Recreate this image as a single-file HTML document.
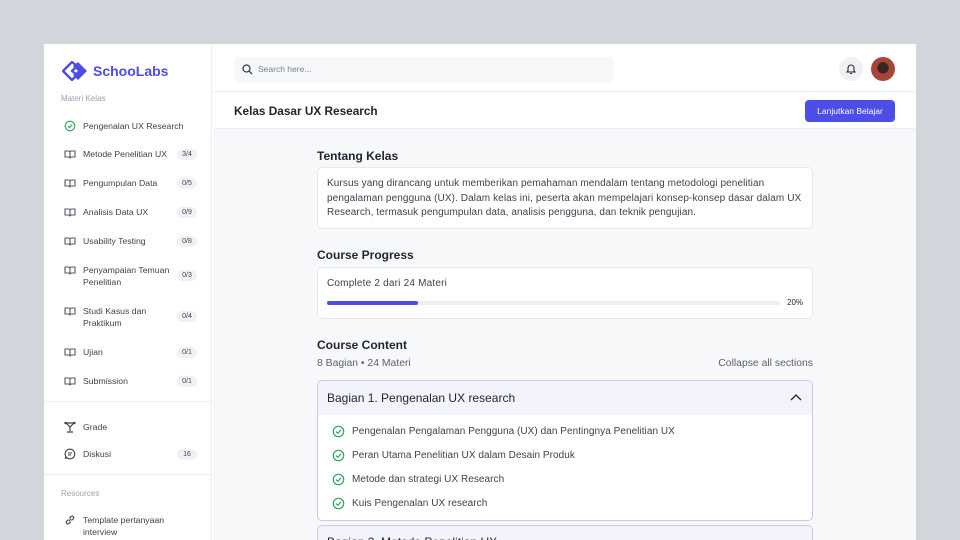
<!DOCTYPE html>
<html><head><meta charset="utf-8"><style>
*{margin:0;padding:0;box-sizing:border-box}
body{width:960px;height:540px;overflow:hidden;background:#d3d5dc;font-family:"Liberation Sans",sans-serif;position:relative;color:#1f2430}
.a{position:absolute}
.card{left:44px;top:44px;width:872px;height:496px;background:#fff;overflow:hidden}
.side{left:0;top:0;width:168px;height:496px;background:#fff;border-right:1px solid #eceef2}
.main{left:169px;top:0;width:703px;height:496px;background:#f7f8fa}
.it{position:absolute;left:20px;font-size:8.7px;color:#3c4250;line-height:12px}
.it svg{position:absolute;left:0;top:0}
.it span{position:absolute;left:19px;white-space:nowrap}
.bd{position:absolute;left:133px;width:20px;height:11px;border-radius:6px;background:#f0f1f4;font-size:7px;text-align:center;line-height:11px;color:#3c4250}
.lbl{position:absolute;left:17px;font-size:8px;color:#9ba1ae}
.hr{position:absolute;left:0;width:168px;height:1px;background:#eceef2}
.h2{position:absolute;left:104px;font-size:12px;font-weight:bold;color:#1f2430}
.box{position:absolute;left:104px;width:496px;background:#fff;border:1px solid #e6e8ec;border-radius:5px}
.li{position:absolute;left:14px;font-size:10px;letter-spacing:.05px;color:#3c4250;white-space:nowrap}
.li svg{position:absolute;left:0;top:-1px}
.li span{position:absolute;left:20px}
</style></head><body>
<div class="a card">
 <div class="a side">
  <svg class="a" style="left:18px;top:17px" width="30" height="20" viewBox="0 0 30 20"><path d="M10 1 L1 10 L10 19 L15 14 L10 10 L15 5Z" fill="none" stroke="#4d4de0" stroke-width="2.4" stroke-linejoin="round"/><path d="M16 1 L25 10 L16 19 L11 14 L16 10 L11 5Z" fill="#4d4de0"/></svg>
  <div class="a" style="left:49px;top:19px;font-size:14px;font-weight:bold;color:#4d4de0">SchooLabs</div>
  <div class="lbl" style="top:50px">Materi Kelas</div>
  <div class="it" style="top:76px"><svg width="12" height="12" viewBox="0 0 12 12"><circle cx="6" cy="6" r="4.8" fill="none" stroke="#2ea35a" stroke-width="1.1"/><path d="M3.8 6.1l1.5 1.5 3-3" fill="none" stroke="#2ea35a" stroke-width="1.1"/></svg><span>Pengenalan UX Research</span></div>
  <div class="it" style="top:104px"><svg width="12" height="12" viewBox="0 0 12 12"><path d="M1 3h4l1 1 1-1h4v6H7l-1 1-1-1H1z M6 4v6" fill="none" stroke="#545a68" stroke-width="1.1"/></svg><span>Metode Penelitian UX</span></div><div class="bd" style="top:105px">3/4</div>
  <div class="it" style="top:133px"><svg width="12" height="12" viewBox="0 0 12 12"><path d="M1 3h4l1 1 1-1h4v6H7l-1 1-1-1H1z M6 4v6" fill="none" stroke="#545a68" stroke-width="1.1"/></svg><span>Pengumpulan Data</span></div><div class="bd" style="top:134px">0/5</div>
  <div class="it" style="top:162px"><svg width="12" height="12" viewBox="0 0 12 12"><path d="M1 3h4l1 1 1-1h4v6H7l-1 1-1-1H1z M6 4v6" fill="none" stroke="#545a68" stroke-width="1.1"/></svg><span>Analisis Data UX</span></div><div class="bd" style="top:163px">0/9</div>
  <div class="it" style="top:191px"><svg width="12" height="12" viewBox="0 0 12 12"><path d="M1 3h4l1 1 1-1h4v6H7l-1 1-1-1H1z M6 4v6" fill="none" stroke="#545a68" stroke-width="1.1"/></svg><span>Usability Testing</span></div><div class="bd" style="top:192px">0/8</div>
  <div class="it" style="top:220px"><svg width="12" height="12" viewBox="0 0 12 12"><path d="M1 3h4l1 1 1-1h4v6H7l-1 1-1-1H1z M6 4v6" fill="none" stroke="#545a68" stroke-width="1.1"/></svg><span>Penyampaian Temuan<br>Penelitian</span></div><div class="bd" style="top:226px">0/3</div>
  <div class="it" style="top:261px"><svg width="12" height="12" viewBox="0 0 12 12"><path d="M1 3h4l1 1 1-1h4v6H7l-1 1-1-1H1z M6 4v6" fill="none" stroke="#545a68" stroke-width="1.1"/></svg><span>Studi Kasus dan<br>Praktikum</span></div><div class="bd" style="top:267px">0/4</div>
  <div class="it" style="top:302px"><svg width="12" height="12" viewBox="0 0 12 12"><path d="M1 3h4l1 1 1-1h4v6H7l-1 1-1-1H1z M6 4v6" fill="none" stroke="#545a68" stroke-width="1.1"/></svg><span>Ujian</span></div><div class="bd" style="top:303px">0/1</div>
  <div class="it" style="top:331px"><svg width="12" height="12" viewBox="0 0 12 12"><path d="M1 3h4l1 1 1-1h4v6H7l-1 1-1-1H1z M6 4v6" fill="none" stroke="#545a68" stroke-width="1.1"/></svg><span>Submission</span></div><div class="bd" style="top:332px">0/1</div>
  <div class="hr" style="top:357px"></div>
  <div class="it" style="top:377px"><svg width="12" height="12" viewBox="0 0 12 12"><path d="M1 2h10M2 2l4 4 4-4M6 6v4M3 11h6" fill="none" stroke="#3c4250" stroke-width="1.2"/><circle cx="1.5" cy="2" r="1.2" fill="#3c4250"/><circle cx="10.5" cy="2" r="1.2" fill="#3c4250"/></svg><span>Grade</span></div>
  <div class="it" style="top:404px"><svg width="12" height="12" viewBox="0 0 12 12"><path d="M6 1.2a4.8 4.8 0 1 1-3.6 8L1.2 10.8l.6-2.4A4.8 4.8 0 0 1 6 1.2z M4 5h4M4 7h3" fill="none" stroke="#3c4250" stroke-width="1.1"/></svg><span>Diskusi</span></div><div class="bd" style="top:405px">16</div>
  <div class="hr" style="top:430px"></div>
  <div class="lbl" style="top:445px">Resources</div>
  <div class="it" style="top:470px"><svg width="12" height="12" viewBox="0 0 12 12"><path d="M5 7l2-2M4.5 5.5l-2 2a1.6 1.6 0 0 0 2.2 2.2l2-2M7.5 6.5l2-2a1.6 1.6 0 0 0-2.2-2.2l-2 2" fill="none" stroke="#3c4250" stroke-width="1.1"/></svg><span>Template pertanyaan<br>interview</span></div>
 </div>
 <div class="a main">
  <div class="a" style="left:0;top:0;width:703px;height:48px;background:#fff;border-bottom:1px solid #eceef2"></div>
  <div class="a" style="left:21px;top:13px;width:380px;height:25px;background:#f6f7f9;border-radius:5px"></div>
  <svg class="a" style="left:29px;top:20px" width="11" height="11" viewBox="0 0 11 11"><circle cx="4.5" cy="4.5" r="3.5" fill="none" stroke="#3c4250" stroke-width="1.3"/><path d="M7.2 7.2l2.8 2.8" stroke="#3c4250" stroke-width="1.3"/></svg>
  <div class="a" style="left:45px;top:20px;font-size:8.5px;color:#7c8290">Search here...</div>
  <div class="a" style="left:626px;top:13px;width:24px;height:24px;border-radius:50%;background:#f0f1f4"></div>
  <svg class="a" style="left:633px;top:19px" width="10" height="12" viewBox="0 0 10 12"><path d="M2 8V5a3 3 0 0 1 6 0v3l1 1H1z M4 10.5h2" fill="none" stroke="#1f2430" stroke-width="1.1"/></svg>
  <div class="a" style="left:658px;top:13px;width:24px;height:24px;border-radius:50%;background:radial-gradient(circle at 50% 45%,#3a2620 0 30%,#a8453a 34%)"></div>
  <div class="a" style="left:0;top:48px;width:703px;height:37px;background:#fff;border-bottom:1px solid #eceef2"></div>
  <div class="a" style="left:21px;top:60px;font-size:11.8px;font-weight:bold;color:#1f2430">Kelas Dasar UX Research</div>
  <div class="a" style="left:592px;top:56px;width:90px;height:22px;border-radius:4px;background:#4d4de8;color:#fff;font-size:8.5px;text-align:center;line-height:22px">Lanjutkan Belajar</div>

  <div class="h2" style="top:149px;top:105px">Tentang Kelas</div>
  <div class="box" style="top:123px;height:62px"><div style="position:absolute;left:9px;top:9px;white-space:nowrap;font-size:10px;letter-spacing:.1px;line-height:14.5px;color:#3c4250">Kursus yang dirancang untuk memberikan pemahaman mendalam tentang metodologi penelitian<br>pengalaman pengguna (UX). Dalam kelas ini, peserta akan mempelajari konsep-konsep dasar dalam UX<br>Research, termasuk pengumpulan data, analisis pengguna, dan teknik pengujian.</div></div>
  <div class="h2" style="top:204px">Course Progress</div>
  <div class="box" style="top:223px;height:52px"><div style="position:absolute;left:9px;top:10px;font-size:10px;letter-spacing:.2px;color:#3c4250">Complete 2 dari 24 Materi</div>
   <div style="position:absolute;left:9px;top:33px;width:453px;height:4px;border-radius:2px;background:#eceef2"><div style="width:91px;height:4px;border-radius:2px;background:#4d4de8"></div></div>
   <div style="position:absolute;left:469px;top:30px;font-size:8px;color:#1f2430">20%</div></div>
  <div class="h2" style="top:294px">Course Content</div>
  <div class="a" style="left:104px;top:314px;font-size:10.4px;color:#5c6270">8 Bagian • 24 Materi</div>
  <div class="a" style="left:480px;top:314px;width:120px;text-align:right;font-size:10.4px;color:#5c6270">Collapse all sections</div>
  <div class="box" style="top:336px;height:141px;border-color:#c9c9ef;overflow:hidden">
   <div style="position:absolute;left:0;top:0;width:496px;height:34px;background:#f3f3fd"></div>
   <div style="position:absolute;left:9px;top:10px;font-size:12px;color:#1f2430">Bagian 1. Pengenalan UX research</div>
   <svg style="position:absolute;left:472px;top:12px" width="12" height="8" viewBox="0 0 12 8"><path d="M1 7l5-5 5 5" fill="none" stroke="#1f2430" stroke-width="1.3"/></svg>
   <div class="li" style="top:45px"><svg width="13" height="13" viewBox="0 0 12 12"><circle cx="6" cy="6" r="4.8" fill="none" stroke="#2ea35a" stroke-width="1.1"/><path d="M3.8 6.1l1.5 1.5 3-3" fill="none" stroke="#2ea35a" stroke-width="1.1"/></svg><span>Pengenalan Pengalaman Pengguna (UX) dan Pentingnya Penelitian UX</span></div>
   <div class="li" style="top:69px"><svg width="13" height="13" viewBox="0 0 12 12"><circle cx="6" cy="6" r="4.8" fill="none" stroke="#2ea35a" stroke-width="1.1"/><path d="M3.8 6.1l1.5 1.5 3-3" fill="none" stroke="#2ea35a" stroke-width="1.1"/></svg><span>Peran Utama Penelitian UX dalam Desain Produk</span></div>
   <div class="li" style="top:93px"><svg width="13" height="13" viewBox="0 0 12 12"><circle cx="6" cy="6" r="4.8" fill="none" stroke="#2ea35a" stroke-width="1.1"/><path d="M3.8 6.1l1.5 1.5 3-3" fill="none" stroke="#2ea35a" stroke-width="1.1"/></svg><span>Metode dan strategi UX Research</span></div>
   <div class="li" style="top:117px"><svg width="13" height="13" viewBox="0 0 12 12"><circle cx="6" cy="6" r="4.8" fill="none" stroke="#2ea35a" stroke-width="1.1"/><path d="M3.8 6.1l1.5 1.5 3-3" fill="none" stroke="#2ea35a" stroke-width="1.1"/></svg><span>Kuis Pengenalan UX research</span></div>
  </div>
  <div class="box" style="top:481px;height:40px;border-color:#c9c9ef;background:#f3f3fd"><div style="position:absolute;left:9px;top:9px;font-size:12px;color:#1f2430">Bagian 2. Metode Penelitian UX</div></div>
 </div>
</div>
</body></html>
